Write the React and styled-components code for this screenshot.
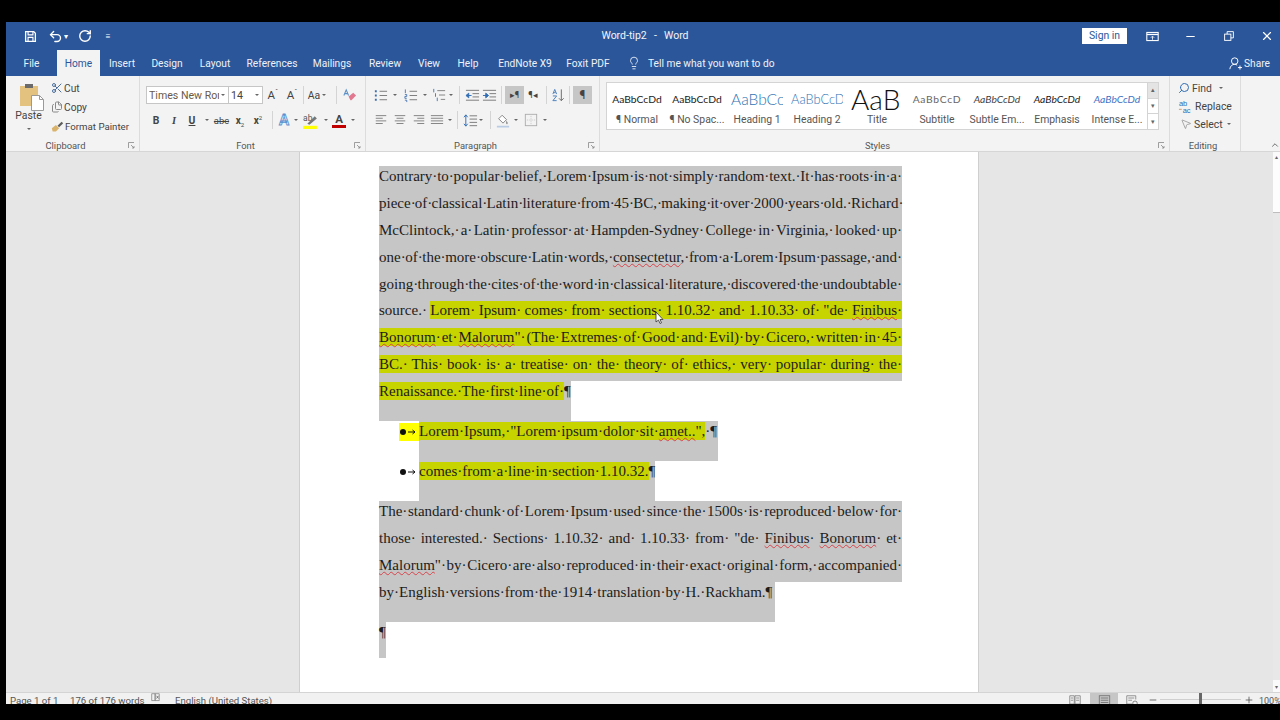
import React from 'react';
import styled, { createGlobalStyle } from 'styled-components';
import { Undo2, RotateCw, Minus, X, Lightbulb, Search, MousePointer2, Scissors, Files, Plus, ChevronUp } from 'lucide-react';

const UI = 'Roboto, "Open Sans", "Liberation Sans", sans-serif';

const Global = createGlobalStyle`
  html, body { margin: 0; background: #000; }
  body { font-family: ${UI}; }
  #root { width: 1280px; height: 720px; overflow: hidden; }
`;

const Frame = styled.div`
  width: 1280px;
  height: 720px;
  box-sizing: border-box;
  padding: 22px 0 16px 6px;
  background: #000;
`;

const Window = styled.div`
  display: flex;
  flex-direction: column;
  height: 682px;
  background: #e6e6e6;
`;

const TitleBar = styled.div`
  display: grid;
  grid-template-columns: 1fr auto 1fr;
  align-items: center;
  height: 28px;
  background: #2b579a;
  color: #fff;
`;

const Quick = styled.div`
  display: flex;
  align-items: center;
  padding-left: 15px;
`;

const QuickBtn = styled.div`
  display: flex;
  align-items: center;
  justify-content: center;
  width: ${p => p.$w}px;
  margin-left: ${p => p.$ml || 0}px;
  height: 20px;
  color: #fff;
  font-size: 8px;
`;

const Title = styled.div`
  font-size: 10.5px;
  word-spacing: 1px;
  color: #f2f5fa;
  padding: 0 0 2px 4px;
  white-space: pre;
`;

const WinControls = styled.div`
  display: flex;
  align-items: center;
  justify-content: flex-end;
`;

const SignIn = styled.div`
  width: 45px;
  height: 16px;
  line-height: 16px;
  text-align: center;
  background: #fff;
  color: #2b579a;
  font-size: 10.4px;
  margin-right: 6px;
`;

const WinBtn = styled.div`
  display: flex;
  align-items: center;
  justify-content: center;
  width: ${p => p.$w}px;
  box-sizing: border-box;
  padding-left: ${p => p.$pl || 0}px;
  height: 24px;
  color: #fff;
`;

const TabBar = styled.div`
  display: flex;
  align-items: stretch;
  height: 26px;
  background: #2b579a;
  color: #eef2f8;
  font-size: 10.2px;
`;

const Tab = styled.div`
  display: flex;
  align-items: center;
  justify-content: center;
  width: ${p => p.$w}px;
  background: ${p => (p.$active ? '#f3f3f3' : 'transparent')};
  color: ${p => (p.$active ? '#2b579a' : 'inherit')};
`;

const TellMe = styled.div`
  display: flex;
  align-items: center;
  gap: 7px;
  padding-left: 13px;
  flex: 1;
`;

const Share = styled.div`
  display: flex;
  align-items: center;
  gap: 2px;
  padding-right: 10px;
`;

const Ribbon = styled.div`
  display: flex;
  height: 76px;
  box-sizing: border-box;
  background: #f3f3f3;
  border-bottom: 1px solid #d6d6d6;
  color: #444;
  font-size: 10.4px;
`;

const Group = styled.div`
  display: flex;
  flex-direction: column;
  width: ${p => p.$w}px;
  box-sizing: border-box;
  padding-left: ${p => p.$pad || 0}px;
  border-right: 1px solid #dcdcdc;
`;

const GroupBody = styled.div`
  flex: 1;
  display: flex;
  flex-direction: column;
  gap: ${p => p.$gap ?? 7}px;
  padding-top: ${p => p.$top ?? 10}px;
`;

const GroupLabel = styled.div`
  display: flex;
  align-items: center;
  height: 12px;
  margin-left: ${p => (p.$pad ? -p.$pad : 0)}px;
  padding-right: 4px;
  font-size: 9.4px;
  color: #555;
  span { flex: 1; text-align: center; }
`;

const Launcher = styled.svg`
  flex: none;
  width: 7px;
  height: 7px;
  margin-left: 3px;
`;

const Row = styled.div`
  display: flex;
  align-items: center;
  height: 18px;
`;

const Tool = styled.div`
  flex: none;
  display: flex;
  align-items: center;
  justify-content: center;
  width: ${p => p.$w}px;
  height: 18px;
  background: ${p => (p.$active ? '#c6c6c6' : 'transparent')};
  color: #444;
  font-size: ${p => p.$size || 10.4}px;
`;

const Sep = styled.div`
  flex: none;
  width: ${p => p.$w}px;
  height: 18px;
  display: flex;
  justify-content: center;
  &::after {
    content: '';
    width: 1px;
    background: #d4d4d4;
  }
`;

const Caret = styled.div`
  flex: none;
  width: ${p => p.$w || 9}px;
  height: 18px;
  display: flex;
  align-items: center;
  justify-content: center;
  &::after {
    content: '';
    border: 2px solid transparent;
    border-top: 2.5px solid #666;
    border-bottom: 0;
  }
`;

const Combo = styled.div`
  flex: none;
  display: flex;
  align-items: center;
  justify-content: space-between;
  width: ${p => p.$w}px;
  height: 18px;
  box-sizing: border-box;
  padding: 0 2px 0 2px;
  background: #fff;
  border: 1px solid #c6c6c6;
  margin-left: -1px;
  font-size: 10.6px;
  overflow: hidden;
  white-space: nowrap;
  color: ${p => p.$color || '#444'};
`;

const ComboText = styled.span`
  width: ${p => p.$w}px;
  overflow: hidden;
`;

const PasteCol = styled.div`
  flex: none;
  display: flex;
  flex-direction: column;
  align-items: center;
  width: 45px;
  padding-top: 8px;
  font-size: 10.4px;
  line-height: 12px;
  svg { margin: 0 0 -1px 7px; }
`;

const PasteCaret = styled(Caret)`
  margin-top: -2px;
`;

const ClipboardGrid = styled.div`
  flex: 1;
  display: flex;
  min-height: 0;
`;

const ClipList = styled.div`
  display: flex;
  flex-direction: column;
  gap: 1px;
  padding-top: 3px;
`;

const ClipItem = styled.div`
  display: flex;
  align-items: center;
  gap: 1px;
  height: 18px;
  font-size: ${p => p.$size || 10.2}px;
  white-space: nowrap;
`;

const StrongA = styled.span`
  font-weight: 700;
  font-size: ${p => p.$size || 10.4}px;
  font-style: ${p => (p.$italic ? 'italic' : 'normal')};
  font-family: ${p => (p.$italic ? '"Liberation Serif", serif' : UI)};
  text-decoration: ${p => p.$line || 'none'};
`;

const GrowA = styled.span`
  font-size: 11.5px;
  sup { font-size: 7px; line-height: 0; vertical-align: 4px; }
`;

const OutlineA = styled.span`
  font-size: 15px;
  font-weight: 700;
  color: #dbe8f6;
  -webkit-text-stroke: 0.8px #5b93d0;
`;

const ColorA = styled.span`
  display: block;
  width: 14px;
  text-align: center;
  font-size: 11.5px;
  line-height: 12px;
  font-weight: 700;
  border-bottom: 3px solid ${p => p.$bar};
  color: ${p => p.$color || '#444'};
`;

const Script = styled.span`
  font-size: 10px;
  font-weight: 700;
  sub, sup { font-size: 6px; font-weight: 400; line-height: 0; }
`;

const Gallery = styled.div`
  display: flex;
  height: 48px;
  width: 553px;
  box-sizing: border-box;
  background: #fff;
  border: 1px solid #d4d4d4;
`;

const StyleItem = styled.div`
  flex: none;
  width: 60px;
  display: flex;
  flex-direction: column;
  align-items: center;
`;

const Sample = styled.div`
  width: 52px;
  height: 29px;
  line-height: 33px;
  overflow: hidden;
  white-space: nowrap;
  text-align: ${p => (p.$big ? 'left' : 'center')};
  font-family: Lato, "Open Sans", sans-serif;
  font-size: ${p => p.$size || 10.3}px;
  font-weight: ${p => p.$weight || 400};
  font-style: ${p => (p.$italic ? 'italic' : 'normal')};
  letter-spacing: ${p => p.$spacing || 0}px;
  color: ${p => p.$color || '#222'};
`;

const StyleName = styled.div`
  font-size: 10.4px;
  line-height: 16px;
  color: #555;
  white-space: nowrap;
`;

const GalleryScroll = styled.div`
  margin-left: auto;
  width: 12px;
  display: flex;
  flex-direction: column;
  border-left: 1px solid #d4d4d4;
`;

const ScrollCell = styled.div`
  flex: 1;
  display: flex;
  align-items: center;
  justify-content: center;
  background: ${p => (p.$off ? '#e4e4e4' : '#fff')};
  border-bottom: ${p => (p.$line ? '1px solid #d4d4d4' : '0')};
  font-size: 7px;
  color: #666;
`;

const EditItem = styled.div`
  display: flex;
  align-items: center;
  gap: 2px;
  height: 18px;
  font-size: 10.4px;
  padding-left: ${p => p.$pad || 8}px;
  white-space: nowrap;
`;

const Collapse = styled.div`
  flex: 1;
  display: flex;
  justify-content: flex-end;
  align-items: flex-end;
  padding: 0 0 1px 0;
  color: #555;
`;

const DocArea = styled.div`
  flex: 1;
  display: flex;
  min-height: 0;
  background: #e6e6e6;
`;

const Canvas = styled.div`
  flex: 1;
  padding-left: 293px;
  overflow: hidden;
`;

const Page = styled.div`
  position: relative;
  width: 680px;
  height: 540px;
  box-sizing: border-box;
  padding: 14px 0 0 79px;
  background: #fff;
  border-left: 1px solid #cfcfcf;
  border-right: 1px solid #cfcfcf;
  font-family: "Liberation Serif", "Times New Roman", serif;
  font-size: 15px;
  color: #1c1c1c;
`;

// justified lines are squeezed a little, as Word does; a line with $w ends a paragraph
const Line = styled.div`
  width: ${p => p.$w || 523}px;
  height: ${p => p.$h || 26.875}px;
  box-sizing: border-box;
  background: #c6c6c6;
  line-height: 20px;
  white-space: nowrap;
  word-spacing: ${p => (p.$w ? '-0.25em' : 'calc(-0.25em - 0.8px)')};
  text-align: left;
  text-align-last: ${p => (p.$w ? 'left' : 'justify')};
`;

const ListLine = styled(Line)`
  line-height: 21px;
`;

const Mark = styled.span`
  background: #c8d400;
  padding: 1px 0;
`;

const Squiggle = styled.span`
  text-decoration: underline wavy #d8434a;
  text-decoration-thickness: 1px;
  text-underline-offset: 1px;
  text-decoration-skip-ink: none;
`;

const ListRow = styled.div`
  display: flex;
  padding-left: 20px;
`;

const Bullet = styled.div`
  flex: none;
  width: 20px;
  height: 18px;
  margin-top: 2px;
  display: flex;
  align-items: center;
  gap: 2px;
  background: ${p => (p.$hl ? '#ffff00' : 'transparent')};
`;

const Dot = styled.span`
  width: 6px;
  height: 6px;
  border-radius: 50%;
  background: #111;
  margin-left: 1px;
`;

const Pointer = styled.svg`
  position: absolute;
  left: 355px;
  top: 159px;
  width: 9px;
  height: 14px;
`;

const ScrollBar = styled.div`
  flex: none;
  width: 7px;
  display: flex;
  flex-direction: column;
  background: #e8e8e8;
`;

const ScrollBtn = styled.div`
  height: ${p => p.$h}px;
  background: #fafafa;
  display: flex;
  align-items: center;
  justify-content: center;
  font-size: 6px;
  color: #666;
`;

const Thumb = styled.div`
  height: 52px;
  background: #fdfdfd;
  border-bottom: 1px solid #bdbdbd;
`;

const Track = styled.div`
  flex: 1;
`;

const StatusBar = styled.div`
  display: flex;
  justify-content: space-between;
  height: 12px;
  box-sizing: border-box;
  background: #f1f1f1;
  border-top: 1px solid #d4d4d4;
  font-size: 9.6px;
  line-height: 16px;
  color: #555;
  overflow: hidden;
`;

const StatusLeft = styled.div`
  display: flex;
  padding-left: 4px;
`;

const StatusText = styled.div`
  width: ${p => p.$w}px;
  flex: none;
  white-space: nowrap;
`;

const StatusRight = styled.div`
  display: flex;
`;

const ViewBtn = styled.div`
  flex: none;
  width: ${p => p.$w}px;
  height: 18px;
  display: flex;
  justify-content: center;
  padding-top: 2px;
  padding-right: ${p => p.$pr || 0}px;
  box-sizing: border-box;
  background: ${p => (p.$active ? '#c6c6c6' : 'transparent')};
  white-space: nowrap;
`;

const Percent = styled.div`
  flex: none;
  width: 24px;
  padding-left: 3px;
  box-sizing: border-box;
  font-size: 9px;
  white-space: nowrap;
`;

const Slider = styled.div`
  flex: none;
  width: 81px;
  height: 11px;
  display: flex;
  justify-content: center;
  padding-right: 1px;
  box-sizing: border-box;
  background: linear-gradient(#cfcfcf, #cfcfcf) no-repeat 0 6px / 100% 1px;
`;

const SliderThumb = styled.div`
  width: 3px;
  background: #666;
`;

/* ---------- icons ---------- */

const Ico = ({ w = 14, h = 14, vb = '0 0 16 16', children }) => (
  <svg width={w} height={h} viewBox={vb} fill="none">{children}</svg>
);

const Launch = () => (
  <Launcher viewBox="0 0 7 7" fill="none">
    <path d="M.5 6V.5H6M3 3l3 3M6 4v2H4" stroke="#888" strokeWidth=".8" />
  </Launcher>
);

const SaveIcon = () => (
  <Ico w={13} h={13}>
    <path d="M2 2h10l2 2v10H2z" stroke="#fff" strokeWidth="1.6" />
    <path d="M5 2v4h6V2M5 14V9h6v5" stroke="#fff" strokeWidth="1.4" />
  </Ico>
);

const PasteIcon = () => (
  <svg width="24" height="27" viewBox="0 0 24 27" fill="none">
    <rect x="0" y="2" width="18" height="20" fill="#e3c27f" />
    <rect x="5" y="0" width="8" height="4" fill="#6a6a6a" />
    <path d="M11.5 11.5h8l4 4v11h-12z" fill="#fff" stroke="#9a9a9a" />
    <path d="M19.5 11.5v4h4" stroke="#9a9a9a" />
  </svg>
);

const PainterIcon = () => (
  <Ico w={13} h={13}>
    <path d="M1 10l5-4 4 4-4 4H2z" fill="#d9b36b" />
    <path d="M8 7l5-5 2 2-5 5z" fill="#5d5d5d" />
  </Ico>
);

const Eraser = () => (
  <Ico w={15} h={15}>
    <path d="M7 9l5-4 3 3-5 5H9z" fill="#e2788f" />
    <path d="M2 8l2.5-6L7 8M3 6h3" stroke="#5a8fc7" strokeWidth="1.1" />
  </Ico>
);

const HighlightIcon = () => (
  <Ico w={17} h={17}>
    <text x="1" y="8" fontSize="8" fill="#555" fontFamily="Roboto">ab</text>
    <path d="M5 11l7-7 2 2-7 6z" fill="#777" />
    <path d="M1 14.5h13" stroke="#ffff00" strokeWidth="3" />
  </Ico>
);

const Bars = ({ rows }) => (
  <Ico w={14} h={14}>
    {rows.map(([x, y, len], i) => (
      <path key={i} d={`M${x} ${y}h${len}`} stroke="#777" strokeWidth="1" />
    ))}
  </Ico>
);

const BulletsIcon = () => (
  <Ico w={15} h={15}>
    <path d="M7 3.5h8M7 8h8M7 12.5h8" stroke="#777" />
    <path d="M2 3.5h2M2 8h2M2 12.5h2" stroke="#3d6fb0" strokeWidth="2" />
  </Ico>
);

const NumberedIcon = () => (
  <Ico w={15} h={15}>
    <path d="M7 3.5h8M7 8h8M7 12.5h8" stroke="#777" />
    <path d="M2.5 1.5v4M2 7h2v2H2v2h2M2 13h2v2" stroke="#3d6fb0" strokeWidth=".9" />
  </Ico>
);

const MultiIcon = () => (
  <Ico w={14} h={14}>
    <path d="M6 3h9M8 8h7M10 13h5" stroke="#777" />
    <path d="M2 1v4M4 6v4M6 11v4" stroke="#3d6fb0" />
  </Ico>
);

const IndentIcon = ({ flip }) => (
  <Ico w={15} h={15}>
    <path d="M1 2.5h14M8 6h7M8 9.5h7M1 13h14" stroke="#777" />
    <path d={flip ? 'M1 8h4M4 5.5L7 8l-3 2.5z' : 'M7 8H3M4 5.5L1 8l3 2.5z'} stroke="#2f6db5" fill="#2f6db5" />
  </Ico>
);

const SortIcon = () => (
  <Ico w={15} h={16}>
    <path d="M2 7l2-5 2 5M3 5.5h2M2 9h4l-4 5h4" stroke="#4a7ebb" strokeWidth="1" />
    <path d="M11 2v12M8.5 11.5L11 14l2.5-2.5" stroke="#666" />
  </Ico>
);

const LineSpaceIcon = () => (
  <Ico w={15} h={15}>
    <path d="M7 3h8M7 6.5h8M7 10h8M7 13.5h8" stroke="#777" />
    <path d="M3 2v12M1 4.5L3 2l2 2.5M1 11.5L3 14l2-2.5" stroke="#2f6db5" />
  </Ico>
);

const ShadingIcon = () => (
  <Ico w={16} h={17}>
    <path d="M7 2l5 5-4 4-5-5z" stroke="#777" fill="#fff" />
    <path d="M12 8c1 2 2 3 1 4s-2-1-1-4z" fill="#888" />
    <path d="M1 15h14" stroke="#b9cce4" strokeWidth="2" />
  </Ico>
);

const BordersIcon = () => (
  <Ico w={14} h={14}>
    <rect x="1.5" y="1.5" width="13" height="13" stroke="#aaa" />
    <path d="M8 1.5v13M1.5 8h13" stroke="#c4c4c4" strokeDasharray="1 1" />
  </Ico>
);

const ReplaceIcon = () => (
  <Ico w={15} h={15}>
    <text x="1" y="7" fontSize="8" fill="#2f6db5" fontFamily="Liberation Sans">ab</text>
    <text x="5" y="15" fontSize="8" fill="#2f6db5" fontFamily="Liberation Sans">ac</text>
    <path d="M1 11h3" stroke="#c96" />
  </Ico>
);

const DisplayIcon = () => (
  <Ico w={13} h={13}>
    <rect x="1" y="3" width="14" height="10" stroke="#fff" strokeWidth="1.3" />
    <path d="M1 5.5h14" stroke="#fff" strokeWidth="1.6" />
    <path d="M8 12V8M6 9.5L8 7.5l2 2" stroke="#fff" />
  </Ico>
);

const RestoreIcon = () => (
  <Ico w={10} h={10}>
    <rect x="1" y="5" width="10" height="10" stroke="#fff" strokeWidth="1.5" />
    <path d="M5 5V1h10v10h-4" stroke="#fff" strokeWidth="1.5" />
  </Ico>
);

const ShareIcon = () => (
  <Ico w={13} h={13}>
    <circle cx="7" cy="5" r="4" stroke="#fff" strokeWidth="1.2" />
    <path d="M1 15c.5-4 3-6 6-6 1 0 2 .3 3 1M11 13h5M13.5 10.5v5" stroke="#fff" strokeWidth="1.2" />
  </Ico>
);

const ProofIcon = () => (
  <Ico w={13} h={11}>
    <path d="M1 1h5v10H1zM6 1h6v10H6z" stroke="#777" />
    <path d="M8 4l3 4M11 4L8 8" stroke="#555" />
  </Ico>
);

const ReadIcon = () => (
  <Ico w={15} h={12}>
    <path d="M1 1h6v11H1zM8 1h7v11H8zM2.5 4h3M2.5 7h3M9.5 4h4M9.5 7h4" stroke="#777" />
  </Ico>
);

const PrintIcon = () => (
  <Ico w={15} h={12}>
    <rect x="1" y="1" width="14" height="12" stroke="#666" />
    <path d="M3 4h10M3 7h10M3 10h10" stroke="#666" />
  </Ico>
);

const WebIcon = () => (
  <Ico w={14} h={12}>
    <path d="M1 1h12v5M1 1v11h7M3 4h8M3 7h5" stroke="#777" />
    <circle cx="12" cy="11" r="3" stroke="#666" />
  </Ico>
);

const TabArrow = () => (
  <svg width="8" height="6" viewBox="0 0 8 6" fill="none">
    <path d="M0 3h7M4.5 1L7 3 4.5 5" stroke="#111" strokeWidth="1" />
  </svg>
);

/* ---------- document text ---------- */

// spaces in the picture are shown as dots, Word's formatting marks
const Words = ({ t }) => t.replace(/ /g, '· ');

const Seg = ({ s }) => {
  if (typeof s === 'string') return <Words t={s} />;
  if (s.sp) return <Squiggle><Words t={s.sp} /></Squiggle>;
  return <Mark>{s.hl.map((p, i) => <Seg key={i} s={p} />)}</Mark>;
};

const para1 = [
  ['Contrary to popular belief, Lorem Ipsum is not simply random text. It has roots in a·'],
  ['piece of classical Latin literature from 45 BC, making it over 2000 years old. Richard·'],
  ['McClintock, a Latin professor at Hampden-Sydney College in Virginia, looked up·'],
  ['one of the more obscure Latin words, ', { sp: 'consectetur' }, ', from a Lorem Ipsum passage, and·'],
  ['going through the cites of the word in classical literature, discovered the undoubtable·'],
  ['source. ', { hl: ['Lorem Ipsum comes from sections 1.10.32 and 1.10.33 of "de ', { sp: 'Finibus' }, '·'] }],
  [{ hl: [{ sp: 'Bonorum' }, ' et ', { sp: 'Malorum' }, '" (The Extremes of Good and Evil) by Cicero, written in 45·'] }],
  [{ hl: ['BC. This book is a treatise on the theory of ethics, very popular during the·'] }],
];

const para2 = [
  ['The standard chunk of Lorem Ipsum used since the 1500s is reproduced below for·'],
  ['those interested. Sections 1.10.32 and 1.10.33 from "de ', { sp: 'Finibus' }, ' ', { sp: 'Bonorum' }, ' et·'],
  [{ sp: 'Malorum' }, '" by Cicero are also reproduced in their exact original form, accompanied·'],
];

const styleItems = [
  { sample: 'AaBbCcDd', name: '¶ Normal' },
  { sample: 'AaBbCcDd', name: '¶ No Spac...' },
  { sample: 'AaBbCc', name: 'Heading 1', size: 15.5, color: '#2e74b5', weight: 300 },
  { sample: 'AaBbCcD', name: 'Heading 2', size: 12.8, color: '#2e74b5', weight: 300 },
  { sample: 'AaB', name: 'Title', size: 28, weight: 300, big: true, color: '#111' },
  { sample: 'AaBbCcD', name: 'Subtitle', color: '#666', spacing: 0.7 },
  { sample: 'AaBbCcDd', name: 'Subtle Em...', color: '#444', italic: true },
  { sample: 'AaBbCcDd', name: 'Emphasis', italic: true },
  { sample: 'AaBbCcDd', name: 'Intense E...', color: '#4472c4', italic: true },
];

const tabs = [
  ['Home', 43], ['Insert', 44], ['Design', 46], ['Layout', 50], ['References', 64], ['Mailings', 56],
  ['Review', 50], ['View', 38], ['Help', 40], ['EndNote X9', 74], ['Foxit PDF', 52],
];

const App = () => (
  <Frame>
    <Global />
    <Window>
      <TitleBar>
        <Quick>
          <QuickBtn $w={18}><SaveIcon /></QuickBtn>
          <QuickBtn $w={18} $ml={7}><Undo2 size={15} strokeWidth={2.2} /></QuickBtn>
          <QuickBtn $w={4}>▾</QuickBtn>
          <QuickBtn $w={34}><RotateCw size={14} strokeWidth={2.4} /></QuickBtn>
          <QuickBtn $w={12}>≡</QuickBtn>
        </Quick>
        <Title>Word-tip2  -  Word</Title>
        <WinControls>
          <SignIn>Sign in</SignIn>
          <WinBtn $w={38}><DisplayIcon /></WinBtn>
          <WinBtn $w={38}><Minus size={13} /></WinBtn>
          <WinBtn $w={39}><RestoreIcon /></WinBtn>
          <WinBtn $w={32} $pl={6}><X size={14} /></WinBtn>
        </WinControls>
      </TitleBar>

      <TabBar>
        <Tab $w={51}>File</Tab>
        {tabs.map(([name, w]) => <Tab key={name} $w={w} $active={name === 'Home'}>{name}</Tab>)}
        <TellMe><Lightbulb size={14} strokeWidth={1.5} />Tell me what you want to do</TellMe>
        <Share><ShareIcon />Share</Share>
      </TabBar>

      <Ribbon>
        <Group $w={134}>
          <ClipboardGrid>
            <PasteCol>
              <PasteIcon />
              Paste
              <PasteCaret />
            </PasteCol>
            <ClipList>
              <ClipItem><Scissors size={12} color="#4a6f9c" />Cut</ClipItem>
              <ClipItem><Files size={12} color="#888" />Copy</ClipItem>
              <ClipItem $size={9.7}><PainterIcon />Format Painter</ClipItem>
            </ClipList>
          </ClipboardGrid>
          <GroupLabel><span>Clipboard</span><Launch /></GroupLabel>
        </Group>

        <Group $w={226} $pad={7}>
          <GroupBody>
            <Row>
              <Combo $w={83} $color="#6b5a48">
                <ComboText $w={70}>Times New Roman</ComboText><Caret $w={6} />
              </Combo>
              <Combo $w={35}>14<Caret $w={6} /></Combo>
              <Tool $w={20}><GrowA>A<sup>ˆ</sup></GrowA></Tool>
              <Tool $w={18}><GrowA>A<sup>ˇ</sup></GrowA></Tool>
              <Sep $w={4} />
              <Tool $w={26}>Aa<Caret $w={8} /></Tool>
              <Sep $w={10} />
              <Tool $w={16}><Eraser /></Tool>
            </Row>
            <Row>
              <Tool $w={18}><StrongA>B</StrongA></Tool>
              <Tool $w={18}><StrongA $italic>I</StrongA></Tool>
              <Tool $w={18}><StrongA $line="underline">U</StrongA></Tool>
              <Caret $w={11} />
              <Tool $w={19} $size={9.4}><s>abc</s></Tool>
              <Tool $w={18}><Script>x<sub>2</sub></Script></Tool>
              <Tool $w={18}><Script>x<sup>2</sup></Script></Tool>
              <Sep $w={10} />
              <Tool $w={14}><OutlineA>A</OutlineA></Tool>
              <Caret />
              <Tool $w={21}><HighlightIcon /></Tool>
              <Caret />
              <Tool $w={18}><ColorA $bar="#c00000">A</ColorA></Tool>
              <Caret $w={10} />
            </Row>
          </GroupBody>
          <GroupLabel $pad={7}><span>Font</span><Launch /></GroupLabel>
        </Group>

        <Group $w={234} $pad={7}>
          <GroupBody>
            <Row>
              <Tool $w={15}><BulletsIcon /></Tool>
              <Caret $w={14} />
              <Tool $w={16}><NumberedIcon /></Tool>
              <Caret $w={13} />
              <Tool $w={16}><MultiIcon /></Tool>
              <Caret $w={7} />
              <Sep $w={10} />
              <Tool $w={16}><IndentIcon /></Tool>
              <Tool $w={18}><IndentIcon flip /></Tool>
              <Sep $w={7} />
              <Tool $w={19} $active $size={9}>▸¶</Tool>
              <Tool $w={18} $size={9}>¶◂</Tool>
              <Sep $w={8} />
              <Tool $w={16}><SortIcon /></Tool>
              <Sep $w={7} />
              <Tool $w={19} $active $size={12}>¶</Tool>
            </Row>
            <Row>
              <Tool $w={16}><Bars rows={[[2, 3, 12], [2, 6, 8], [2, 9, 12], [2, 12, 8]]} /></Tool>
              <Tool $w={21}><Bars rows={[[2, 3, 12], [4, 6, 8], [2, 9, 12], [4, 12, 8]]} /></Tool>
              <Tool $w={18}><Bars rows={[[2, 3, 12], [6, 6, 8], [2, 9, 12], [6, 12, 8]]} /></Tool>
              <Tool $w={18}><Bars rows={[[1, 3, 14], [1, 6, 14], [1, 9, 14], [1, 12, 14]]} /></Tool>
              <Caret $w={7} />
              <Sep $w={9} />
              <Tool $w={16}><LineSpaceIcon /></Tool>
              <Caret $w={6} />
              <Sep $w={12} />
              <Tool $w={14}><ShadingIcon /></Tool>
              <Caret $w={12} />
              <Tool $w={18}><BordersIcon /></Tool>
              <Caret $w={10} />
            </Row>
          </GroupBody>
          <GroupLabel $pad={7}><span>Paragraph</span><Launch /></GroupLabel>
        </Group>

        <Group $w={570} $pad={6}>
          <GroupBody $top={6}>
            <Gallery>
              {styleItems.map(s => (
                <StyleItem key={s.name}>
                  <Sample $size={s.size} $color={s.color} $weight={s.weight} $big={s.big} $italic={s.italic} $spacing={s.spacing}>
                    {s.sample}
                  </Sample>
                  <StyleName>{s.name}</StyleName>
                </StyleItem>
              ))}
              <GalleryScroll>
                <ScrollCell $off $line>▴</ScrollCell>
                <ScrollCell $line>▾</ScrollCell>
                <ScrollCell>▾</ScrollCell>
              </GalleryScroll>
            </Gallery>
          </GroupBody>
          <GroupLabel $pad={6}><span>Styles</span><Launch /></GroupLabel>
        </Group>

        <Group $w={71}>
          <GroupBody $top={3} $gap={0}>
            <EditItem><Search size={12} color="#2f6db5" transform="scale(-1 1)" />Find<Caret $w={14} /></EditItem>
            <EditItem><ReplaceIcon />Replace</EditItem>
            <EditItem $pad={10}><MousePointer2 size={12} strokeWidth={1.2} color="#777" />Select<Caret $w={8} /></EditItem>
          </GroupBody>
          <GroupLabel><span>Editing</span></GroupLabel>
        </Group>

        <Collapse><ChevronUp size={10} /></Collapse>
      </Ribbon>

      <DocArea>
        <Canvas>
          <Page>
            {para1.map((line, i) => (
              <Line key={i}>{line.map((s, j) => <Seg key={j} s={s} />)}</Line>
            ))}
            <Line $w={192} $h={40}><Mark><Words t="Renaissance. The first line of·" /></Mark>¶</Line>
            <ListRow>
              <Bullet $hl><Dot /><TabArrow /></Bullet>
              <ListLine $w={299} $h={40}>
                <Mark><Words t={'Lorem Ipsum, "Lorem ipsum dolor sit '} /><Squiggle>amet..</Squiggle>",</Mark>·¶
              </ListLine>
            </ListRow>
            <ListRow>
              <Bullet><Dot /><TabArrow /></Bullet>
              <ListLine $w={236} $h={40}>
                <Mark><Words t="comes from a line in section 1.10.32." /></Mark>¶
              </ListLine>
            </ListRow>
            {para2.map((line, i) => (
              <Line key={i}>{line.map((s, j) => <Seg key={j} s={s} />)}</Line>
            ))}
            <Line $w={396} $h={40}><Words t="by English versions from the 1914 translation by H. Rackham." />¶</Line>
            <Line $w={7} $h={36}>¶</Line>
            <Pointer viewBox="0 0 9 14">
              <path d="M1 1v10l2.5-2 1.5 3.5 1.5-.7L5 8.5h3z" fill="#fff" stroke="#333" strokeWidth=".8" />
            </Pointer>
          </Page>
        </Canvas>
        <ScrollBar>
          <ScrollBtn $h={8}>▴</ScrollBtn>
          <Thumb />
          <Track />
          <ScrollBtn $h={12}>▾</ScrollBtn>
        </ScrollBar>
      </DocArea>

      <StatusBar>
        <StatusLeft>
          <StatusText $w={60}>Page 1 of 1</StatusText>
          <StatusText $w={80}>176 of 176 words</StatusText>
          <StatusText $w={25}><ProofIcon /></StatusText>
          <StatusText $w={100}>English (United States)</StatusText>
        </StatusLeft>
        <StatusRight>
          <ViewBtn $w={22} $pr={8}><ReadIcon /></ViewBtn>
          <ViewBtn $w={28} $active><PrintIcon /></ViewBtn>
          <ViewBtn $w={27}><WebIcon /></ViewBtn>
          <ViewBtn $w={15}><Minus size={10} /></ViewBtn>
          <Slider><SliderThumb /></Slider>
          <ViewBtn $w={15}><Plus size={10} /></ViewBtn>
          <Percent>100%</Percent>
        </StatusRight>
      </StatusBar>
    </Window>
  </Frame>
);

export default App;
